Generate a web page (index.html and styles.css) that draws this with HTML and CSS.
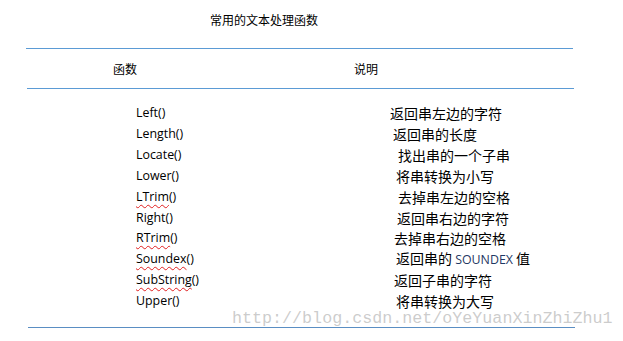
FILE: index.html
```html
<!DOCTYPE html>
<html lang="zh">
<head>
<meta charset="utf-8">
<title>常用的文本处理函数</title>
<link rel="stylesheet" href="styles.css">
</head>
<body>
<div class="sheet">
  <div class="title">常用的文本处理函数</div>
  <div class="rule rule-top"></div>
  <div class="head">
    <div class="cell">函数</div>
    <div class="cell">说明</div>
  </div>
  <div class="rule rule-mid"></div>
  <div class="rows">
    <div class="fn">Left()</div><div class="desc" style="padding-left:0px">返回串左边的字符</div>
    <div class="fn">Length()</div><div class="desc" style="padding-left:3px">返回串的长度</div>
    <div class="fn">Locate()</div><div class="desc" style="padding-left:8px">找出串的一个子串</div>
    <div class="fn">Lower()</div><div class="desc" style="padding-left:6px">将串转换为小写</div>
    <div class="fn"><span class="spell">LTrim</span>()</div><div class="desc" style="padding-left:8px">去掉串左边的空格</div>
    <div class="fn">Right()</div><div class="desc" style="padding-left:7px">返回串右边的字符</div>
    <div class="fn"><span class="spell">RTrim</span>()</div><div class="desc" style="padding-left:4px">去掉串右边的空格</div>
    <div class="fn"><span class="spell">Soundex</span>()</div><div class="desc" style="padding-left:6px">返回串的 <span class="latin">SOUNDEX</span> 值</div>
    <div class="fn"><span class="spell">SubString</span>()</div><div class="desc" style="padding-left:4px">返回子串的字符</div>
    <div class="fn">Upper()</div><div class="desc" style="padding-left:6px">将串转换为大写</div>
  </div>
  <div class="rule rule-bottom"></div>
</div>
<div class="watermark">http://blog.csdn.net/oYeYuanXinZhiZhu1</div>
</body>
</html>
```

FILE: styles.css
```css
html, body {
  margin: 0;
  padding: 0;
  background: #ffffff;
}
body {
  width: 623px;
  height: 341px;
  overflow: hidden;
  position: relative;
  font-family: "Noto Sans CJK SC", "Noto Sans", sans-serif;
  color: #000;
}
.sheet {
  padding-left: 26px;
}
.title {
  padding-left: 184px;
  padding-top: 12px;
  height: 48px;
  font-size: 12px;
  line-height: 16px;
  box-sizing: border-box;
}
.rule {
  width: 547px;
  height: 1px;
  background: #5b9bd5;
}
.rule-mid {
  margin-left: 1px;
}
.rule-bottom {
  margin-left: 2px;
  background: #5a8ec3;
}
.head {
  display: grid;
  grid-template-columns: 241px 1fr;
  padding-left: 87px;
  height: 39px;
  font-size: 12px;
  line-height: 39px;
}
.rows {
  display: grid;
  grid-template-columns: 254px 1fr;
  grid-auto-rows: 20.83px;
  padding-left: 110px;
  padding-top: 14px;
  padding-bottom: 16px;
  align-items: center;
}
.fn {
  font-family: "Open Sans", "Noto Sans", sans-serif;
  font-size: 12.4px;
  line-height: 20px;
  color: #000;
}
.desc {
  font-size: 14px;
  line-height: 20px;
}
.spell {
  text-decoration: underline wavy #e02020;
  text-decoration-thickness: 1px;
  text-underline-offset: 3px;
}
.latin {
  font-family: "Open Sans", "Noto Sans", sans-serif;
  font-size: 12.4px;
  color: #1f3864;
}
.watermark {
  position: absolute;
  left: 232px;
  top: 309px;
  font-family: "Liberation Mono", "DejaVu Sans Mono", monospace;
  font-size: 16.7px;
  line-height: 20px;
  color: rgba(170, 170, 170, 0.6);
  white-space: nowrap;
}
```
